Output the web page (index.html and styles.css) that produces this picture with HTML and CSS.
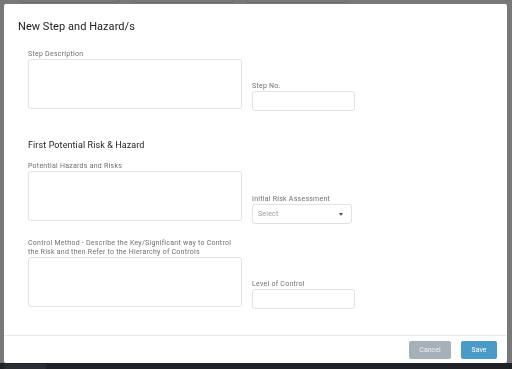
FILE: index.html
```html
<!DOCTYPE html>
<html>
<head>
<meta charset="utf-8">
<link rel="stylesheet" href="styles.css">
</head>
<body>
<div class="page">
  <div class="bg-top">
    <span class="bg-box b1"></span>
    <span class="bg-box b2"></span>
    <span class="bg-box b3"></span>
  </div>
  <div class="bg-mid"></div>
  <div class="bg-bottom">
    <span class="bg-tab"></span>
  </div>
</div>

<div class="modal">
  <div class="modal-body">
    <h1 class="title">New Step and Hazard/s</h1>

    <div class="row">
      <div class="col-left">
        <label class="label">Step Description</label>
        <div class="textarea"></div>
      </div>
      <div class="col-right">
        <label class="label">Step No.</label>
        <div class="input"></div>
      </div>
    </div>

    <h2 class="section">First Potential Risk &amp; Hazard</h2>

    <div class="row row-second">
      <div class="col-left">
        <label class="label">Potential Hazards and Risks</label>
        <div class="textarea"></div>
      </div>
      <div class="col-right">
        <label class="label">Initial Risk Assessment</label>
        <div class="select">
          <span class="placeholder">Select</span>
          <span class="caret"></span>
        </div>
      </div>
    </div>

    <div class="row row-third">
      <div class="col-left">
        <label class="label">Control Method - Describe the Key/Significant way to Control the Risk and then Refer to the Hierarchy of Controls</label>
        <div class="textarea"></div>
      </div>
      <div class="col-right">
        <label class="label">Level of Control</label>
        <div class="input"></div>
      </div>
    </div>
  </div>

  <div class="modal-footer">
    <button class="btn btn-cancel">Cancel</button>
    <button class="btn btn-save">Save</button>
  </div>
</div>
</body>
</html>
```

FILE: styles.css
```css
* { box-sizing: border-box; }

html, body {
  margin: 0;
  padding: 0;
  width: 512px;
  height: 369px;
  overflow: hidden;
  font-family: Roboto, "Liberation Sans", sans-serif;
}

.page {
  width: 512px;
  height: 369px;
  display: flex;
  flex-direction: column;
  background: #787878;
}

.bg-top {
  height: 4px;
  position: relative;
}

.bg-box {
  position: absolute;
  top: -6px;
  height: 9px;
  border: 1px solid #6c6c6c;
  border-radius: 3px;
}
.b1 { left: 20px; width: 100px; }
.b2 { left: 133px; width: 101px; }
.b3 { left: 246px; width: 101px; }

.bg-mid {
  flex: 1;
}

.bg-bottom {
  height: 6px;
  background: #1e2226;
  position: relative;
}

.bg-tab {
  position: absolute;
  left: 4px;
  top: 1px;
  width: 42px;
  height: 5px;
  background: #2a2e33;
}

.modal {
  position: absolute;
  left: 4px;
  top: 4px;
  width: 503px;
  height: 359px;
  background: #ffffff;
  border-radius: 2px;
  display: flex;
  flex-direction: column;
  will-change: transform;
}

.modal-body {
  flex: 1;
  padding: 16px 0 0 14px;
}

.title {
  margin: 0 0 13px 0;
  font-size: 11px;
  line-height: 14px;
  font-weight: 400;
  color: #222;
  letter-spacing: 0.05px;
}

.row {
  display: flex;
  align-items: flex-end;
  gap: 10px;
  padding-left: 10px;
}

.col-left {
  width: 214px;
  padding-bottom: 2px;
  display: flex;
  flex-direction: column;
}

.row-second .col-left {
  padding-bottom: 3px;
}

.col-right {
  width: 103px;
  display: flex;
  flex-direction: column;
}

.label {
  display: block;
  font-size: 7px;
  line-height: 9px;
  color: #707070;
  padding-top: 3px;
  margin-bottom: 0;
  letter-spacing: 0.25px;
}

.textarea {
  height: 50px;
  border: 1px solid #e2e2e2;
  border-radius: 3px;
}

.input {
  height: 20px;
  border: 1px solid #e2e2e2;
  border-radius: 3px;
}

.select {
  width: 100px;
  height: 20px;
  border: 1px solid #e2e2e2;
  border-radius: 3px;
  display: flex;
  align-items: center;
  justify-content: space-between;
  padding: 0 8px 0 5px;
}

.placeholder {
  font-size: 7px;
  color: #9a9a9a;
  letter-spacing: 0.2px;
}

.caret {
  width: 0;
  height: 0;
  border-left: 2.5px solid transparent;
  border-right: 2.5px solid transparent;
  border-top: 3px solid #555;
  margin-top: 1px;
}

.section {
  margin: 28px 0 8px 10px;
  font-size: 9px;
  line-height: 12px;
  font-weight: 400;
  color: #222;
  letter-spacing: 0.1px;
}

.row-third {
  margin-top: 12px;
}

.modal-footer {
  height: 28px;
  border-top: 1px solid #e8e8e8;
  display: flex;
  justify-content: flex-end;
  align-items: flex-start;
  gap: 10px;
  padding: 5px 10px 0 0;
}

.btn {
  height: 18px;
  border: none;
  border-radius: 2px;
  font-family: Roboto, "Liberation Sans", sans-serif;
  font-size: 7px;
  color: #fff;
  padding: 0;
}

.btn-cancel {
  width: 42px;
  background: #a7b0b7;
  color: #eef0f2;
}

.btn-save {
  width: 36px;
  background: #4a9bc6;
}
```
